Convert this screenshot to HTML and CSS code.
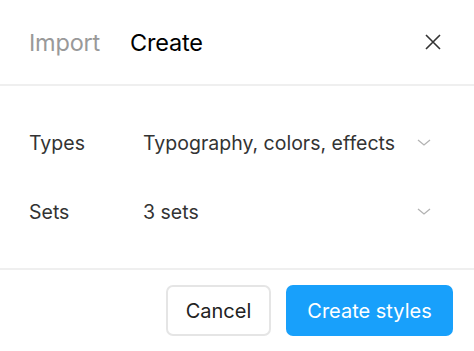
FILE: index.html
```html
<!DOCTYPE html>
<html lang="en">
<head>
    <meta charset="UTF-8">
    <meta name="viewport" content="width=device-width, initial-scale=1.0">
    <link rel="stylesheet" href="styles.css">
    <title>Create styles</title>
</head>
<body>
    <div class="dialog">
        <div class="header">
            <div class="tabs">
                <span class="tab">Import</span>
                <span class="tab active">Create</span>
            </div>
            <button class="close" aria-label="Close">
                <svg width="18" height="18" viewBox="0 0 18 18">
                    <path d="M2 2 L16 16 M16 2 L2 16" stroke="#333" stroke-width="1.6" fill="none"/>
                </svg>
            </button>
        </div>

        <div class="content">
            <div class="row">
                <span class="label">Types</span>
                <span class="value">Typography, colors, effects</span>
                <svg class="chevron" width="14" height="8" viewBox="0 0 14 8">
                    <path d="M1 1 L7 6 L13 1" stroke="#b3b3b3" stroke-width="1.3" fill="none"/>
                </svg>
            </div>
            <div class="row">
                <span class="label">Sets</span>
                <span class="value">3 sets</span>
                <svg class="chevron" width="14" height="8" viewBox="0 0 14 8">
                    <path d="M1 1 L7 6 L13 1" stroke="#b3b3b3" stroke-width="1.3" fill="none"/>
                </svg>
            </div>
        </div>

        <div class="footer">
            <button class="btn btn-secondary">Cancel</button>
            <button class="btn btn-primary">Create styles</button>
        </div>
    </div>
</body>
</html>
```

FILE: styles.css
```css
* {
    margin: 0;
    padding: 0;
    box-sizing: border-box;
}

body {
    font-family: 'Inter', 'Liberation Sans', sans-serif;
    background-color: #fff;
    color: #333;
}

.dialog {
    width: 474px;
    height: 351px;
    background: #fff;
}

/* header with tabs */
.header {
    height: 86px;
    display: flex;
    align-items: center;
    justify-content: space-between;
    padding: 0 32px 0 29px;
    border-bottom: 2px solid #efefef;
}

.tabs {
    display: flex;
    gap: 30px;
}

.tab {
    font-size: 23.5px;
    color: #999;
    letter-spacing: -0.2px;
}

.tab.active {
    color: #000;
}

.close {
    background: none;
    border: none;
    width: 18px;
    height: 18px;
    display: flex;
    cursor: pointer;
}

/* settings rows */
.content {
    padding: 22px 0;
    border-bottom: 2px solid #efefef;
}

.row {
    height: 69px;
    display: flex;
    align-items: center;
    padding: 0 43px 0 29px;
    font-size: 19.5px;
}

.label {
    width: 114px;
    color: #333;
}

.value {
    flex: 1;
    color: #333;
}

.chevron {
    display: block;
}

/* footer buttons */
.footer {
    display: flex;
    justify-content: flex-end;
    gap: 15px;
    padding: 15px 21px 0 0;
}

.btn {
    font-family: 'Inter', 'Liberation Sans', sans-serif;
    font-size: 20px;
    height: 51px;
    border-radius: 7px;
    cursor: pointer;
}

.btn-secondary {
    width: 105px;
    background: #fff;
    color: #222;
    border: 2px solid #e5e5e5;
}

.btn-primary {
    width: 167px;
    background: #18a0fb;
    color: #fff;
    border: none;
}
```
